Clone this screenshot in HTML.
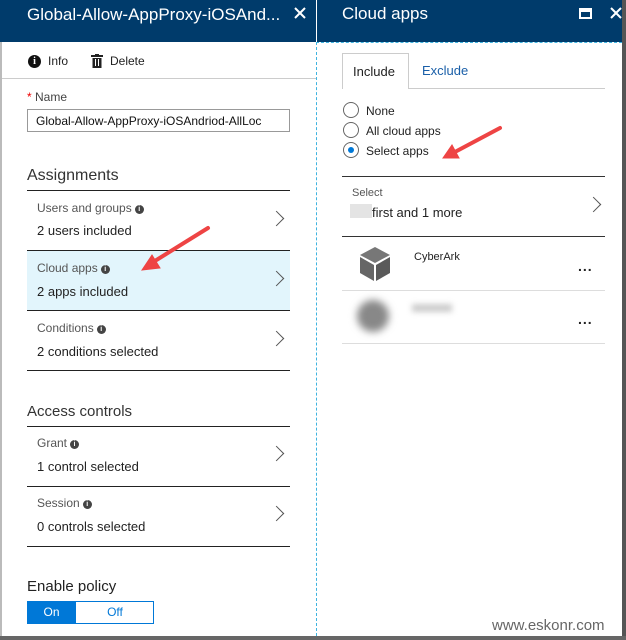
<!DOCTYPE html>
<html><head><style>
*{margin:0;padding:0;box-sizing:border-box}
body{width:626px;height:640px;background:#fff;font-family:"Liberation Sans","DejaVu Sans",sans-serif;position:relative;overflow:hidden;color:#222}
.a{position:absolute;white-space:nowrap}
.hd{background:#003b6b;color:#fff}
.line{position:absolute;height:1px}
.info{display:inline-block;width:9px;height:9px;border-radius:50%;background:#444;color:#fff;font-size:7px;text-align:center;line-height:9px;font-weight:bold;vertical-align:1px;margin-left:3px}
.chev{position:absolute;width:11px;height:11px;border-right:1px solid #555;border-top:1px solid #555;transform:rotate(45deg)}
.radio{position:absolute;width:16px;height:16px;border:1px solid #666;border-radius:50%;background:#fff}
</style></head><body>
<div class="a" style="left:0;top:0;width:2px;height:640px;background:#bbb"></div>
<div class="a" style="left:622px;top:0;width:4px;height:640px;background:#555"></div>
<div class="a" style="left:0;top:636px;width:626px;height:4px;background:#666"></div>
<div class="a" style="left:316px;top:42px;height:594px;border-left:1px dashed #3fb4e0"></div>
<div class="a" style="left:316px;top:42px;width:306px;border-top:1px dashed #3fb4e0"></div>

<div class="a hd" style="left:0;top:0;width:316px;height:42px"></div>
<div class="a" style="left:27px;top:5px;font-size:17px;color:#fff">Global-Allow-AppProxy-iOSAnd...</div>
<svg class="a" style="left:294px;top:7px" width="12" height="12" viewBox="0 0 12 12"><path d="M1 1L11 11M11 1L1 11" stroke="#fff" stroke-width="2"/></svg>
<div class="a" style="left:28px;top:55px;width:13px;height:13px;border-radius:50%;background:#111;color:#fff;font-size:10px;text-align:center;line-height:13px;font-weight:bold;font-family:'Liberation Serif',serif">i</div>
<div class="a" style="left:48px;top:54px;font-size:12px">Info</div>
<svg class="a" style="left:91px;top:54px" width="12" height="14" viewBox="0 0 12 14"><rect x="0" y="1" width="12" height="2" fill="#222"/><rect x="4" y="0" width="4" height="2" fill="#222"/><rect x="1.5" y="4" width="9" height="10" fill="#222"/><rect x="4" y="5" width="1" height="7" fill="#fff"/><rect x="7" y="5" width="1" height="7" fill="#fff"/></svg>
<div class="a" style="left:110px;top:54px;font-size:12px">Delete</div>
<div class="line" style="left:2px;top:78px;width:314px;background:#ccc"></div>
<div class="a" style="left:27px;top:90px;font-size:12px;color:#444"><span style="color:#e00">*</span> Name</div>
<div class="a" style="left:27px;top:109px;width:263px;height:23px;border:1px solid #999;font-size:12px;padding:4px 0 0 8px;color:#111">Global-Allow-AppProxy-iOSAndriod-AllLoc</div>
<div class="a" style="left:27px;top:167px;font-size:16px;color:#333">Assignments</div>
<div class="line" style="left:27px;top:190px;width:263px;background:#222"></div>
<div class="a" style="left:37px;top:201px;font-size:12px;color:#555">Users and groups<span class="info">i</span></div>
<div class="a" style="left:37px;top:223px;font-size:13px">2 users included</div>
<div class="chev" style="left:271px;top:213px"></div>
<div class="line" style="left:27px;top:250px;width:263px;background:#222"></div>
<div class="a" style="left:27px;top:251px;width:263px;height:59px;background:#e2f5fc"></div>
<div class="a" style="left:37px;top:261px;font-size:12px;color:#555">Cloud apps<span class="info">i</span></div>
<div class="a" style="left:37px;top:284px;font-size:13px">2 apps included</div>
<div class="chev" style="left:271px;top:273px"></div>
<div class="line" style="left:27px;top:310px;width:263px;background:#222"></div>
<div class="a" style="left:37px;top:321px;font-size:12px;color:#555">Conditions<span class="info">i</span></div>
<div class="a" style="left:37px;top:344px;font-size:13px">2 conditions selected</div>
<div class="chev" style="left:271px;top:333px"></div>
<div class="line" style="left:27px;top:370px;width:263px;background:#222"></div>
<div class="a" style="left:27px;top:403px;font-size:15px;color:#333">Access controls</div>
<div class="line" style="left:27px;top:426px;width:263px;background:#222"></div>
<div class="a" style="left:37px;top:436px;font-size:12px;color:#555">Grant<span class="info">i</span></div>
<div class="a" style="left:37px;top:459px;font-size:13px">1 control selected</div>
<div class="chev" style="left:271px;top:448px"></div>
<div class="line" style="left:27px;top:486px;width:263px;background:#222"></div>
<div class="a" style="left:37px;top:496px;font-size:12px;color:#555">Session<span class="info">i</span></div>
<div class="a" style="left:37px;top:519px;font-size:13px">0 controls selected</div>
<div class="chev" style="left:271px;top:508px"></div>
<div class="line" style="left:27px;top:546px;width:263px;background:#222"></div>
<div class="a" style="left:27px;top:578px;font-size:15px;color:#222">Enable policy</div>
<div class="a" style="left:27px;top:601px;width:127px;height:23px;border:1px solid #0078d7"></div>
<div class="a" style="left:27px;top:601px;width:49px;height:23px;background:#0078d7;color:#fff;font-size:12px;text-align:center;line-height:23px">On</div>
<div class="a" style="left:76px;top:601px;width:78px;height:23px;color:#0078d7;font-size:12px;text-align:center;line-height:23px">Off</div>

<div class="a hd" style="left:317px;top:0;width:305px;height:42px"></div>
<div class="a" style="left:342px;top:4px;font-size:17px;color:#fff">Cloud apps</div>
<div class="a" style="left:579px;top:8px;width:13px;height:11px;border:2px solid #fff;border-top-width:4px"></div>
<svg class="a" style="left:610px;top:7px" width="12" height="12" viewBox="0 0 12 12"><path d="M1 1L11 11M11 1L1 11" stroke="#fff" stroke-width="2"/></svg>
<div class="a" style="left:342px;top:53px;width:67px;height:36px;border:1px solid #ccc;border-bottom:none;background:#fff;z-index:2;font-size:13px;padding:10px 0 0 10px">Include</div>
<div class="a" style="left:422px;top:63px;font-size:13px;color:#1a5fa8">Exclude</div>
<div class="line" style="left:342px;top:88px;width:263px;background:#ccc"></div>
<div class="radio" style="left:343px;top:102px"></div>
<div class="a" style="left:366px;top:104px;font-size:12px">None</div>
<div class="radio" style="left:343px;top:122px"></div>
<div class="a" style="left:366px;top:124px;font-size:12px">All cloud apps</div>
<div class="radio" style="left:343px;top:142px"></div>
<div class="a" style="left:348px;top:147px;width:6px;height:6px;border-radius:50%;background:#0078d7"></div>
<div class="a" style="left:366px;top:144px;font-size:12px">Select apps</div>
<div class="line" style="left:342px;top:176px;width:263px;background:#333"></div>
<div class="a" style="left:352px;top:187px;font-size:11px;color:#555">Select</div>
<div class="a" style="left:350px;top:204px;width:22px;height:14px;background:#e4e4e4"></div>
<div class="a" style="left:372px;top:205px;font-size:13px">first and 1 more</div>
<div class="chev" style="left:588px;top:199px"></div>
<div class="line" style="left:342px;top:236px;width:263px;background:#333"></div>
<svg class="a" style="left:360px;top:247px" width="30" height="34" viewBox="0 0 30 34"><polygon points="15,0 30,8 15,16 0,8" fill="#777"/><polygon points="0,10 14,18 14,34 0,26" fill="#666"/><polygon points="16,18 30,10 30,26 16,34" fill="#5a5a5a"/></svg>
<div class="a" style="left:414px;top:251px;font-size:11px">CyberArk</div>
<div class="a" style="left:578px;top:258px;font-size:14px;font-weight:bold;letter-spacing:1px">...</div>
<div class="line" style="left:342px;top:290px;width:263px;background:#ddd"></div>
<div class="a" style="left:357px;top:300px;width:32px;height:32px;border-radius:50%;background:#888;filter:blur(4px)"></div>
<div class="a" style="left:412px;top:304px;width:40px;height:8px;background:#ccc;filter:blur(3px)"></div>
<div class="a" style="left:578px;top:311px;font-size:14px;font-weight:bold;letter-spacing:1px">...</div>
<div class="line" style="left:342px;top:343px;width:263px;background:#ddd"></div>

<svg class="a" style="left:0;top:0" width="626" height="640">
<g stroke="#ee4444" stroke-width="4" stroke-linecap="round" fill="#ee4444">
<line x1="208" y1="228" x2="150" y2="264"/>
<polygon points="142,270 152,255 160,268" stroke-width="1"/>
<line x1="500" y1="128" x2="453" y2="153"/>
<polygon points="443,158 452,145 459,158" stroke-width="1"/>
</g></svg>
<div class="a" style="left:492px;top:617px;font-size:15px;color:#666">www.eskonr.com</div>
</body></html>
